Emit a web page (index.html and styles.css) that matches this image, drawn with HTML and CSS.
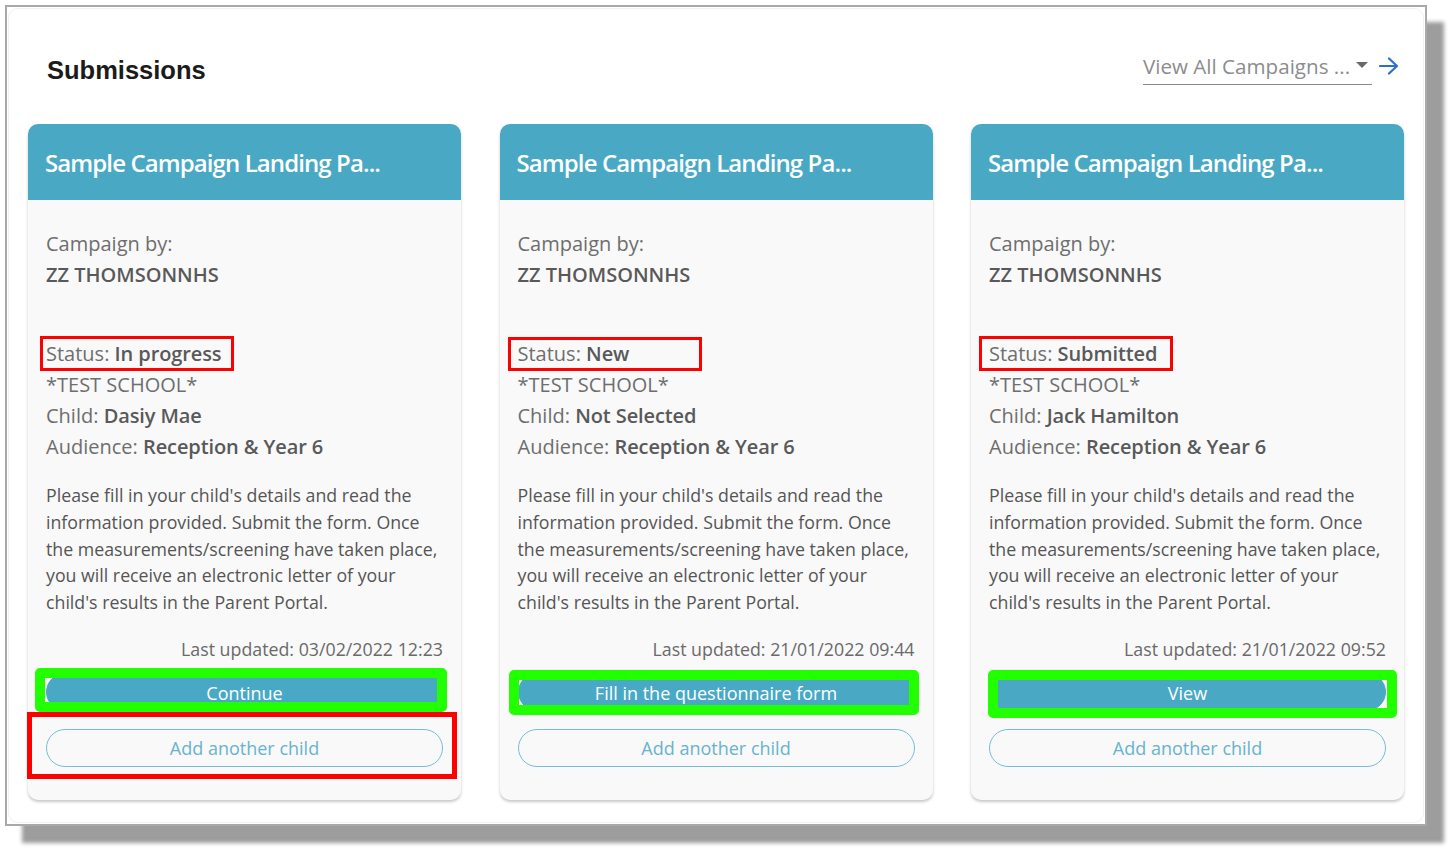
FILE: index.html
```html
<!DOCTYPE html>
<html lang="en">
<head>
<meta charset="utf-8">
<title>Submissions</title>
<link rel="stylesheet" href="styles.css">
</head>
<body>
<div class="frame">
  <div class="panel">
    <div class="top">
      <h1 class="title">Submissions</h1>
      <div class="viewall">
        <div class="select">
          <span class="select-text">View All Campaigns ...</span>
          <span class="caret"></span>
        </div>
        <svg class="arrow" width="20" height="18" viewBox="0 0 20 18"><path d="M1 9H18M10 1.5L18 9L10 16.5" fill="none" stroke="#2b6fd1" stroke-width="2.2" stroke-linecap="round" stroke-linejoin="round"/></svg>
      </div>
    </div>
    <div class="cards">
      <div class="card">
        <div class="card-head">Sample Campaign Landing Pa...</div>
        <div class="card-body">
          <div class="block">
            <div class="line">Campaign by:</div>
            <div class="line strong">ZZ THOMSONNHS</div>
          </div>
          <div class="block info">
            <div class="line">Status: <b>In progress</b></div>
            <div class="line">*TEST SCHOOL*</div>
            <div class="line">Child: <b>Dasiy Mae</b></div>
            <div class="line">Audience: <b>Reception &amp; Year 6</b></div>
          </div>
          <p class="desc">Please fill in your child's details and read the information provided. Submit the form. Once the measurements/screening have taken place, you will receive an electronic letter of your child's results in the Parent Portal.</p>
          <div class="updated">Last updated: 03/02/2022 12:23</div>
          <button class="btn primary">Continue</button>
          <button class="btn outline">Add another child</button>
        </div>
        <div class="mark red-status c1"></div>
        <div class="mark green c1"></div>
        <div class="mark red-add c1"></div>
      </div>
      <div class="card">
        <div class="card-head">Sample Campaign Landing Pa...</div>
        <div class="card-body">
          <div class="block">
            <div class="line">Campaign by:</div>
            <div class="line strong">ZZ THOMSONNHS</div>
          </div>
          <div class="block info">
            <div class="line">Status: <b>New</b></div>
            <div class="line">*TEST SCHOOL*</div>
            <div class="line">Child: <b>Not Selected</b></div>
            <div class="line">Audience: <b>Reception &amp; Year 6</b></div>
          </div>
          <p class="desc">Please fill in your child's details and read the information provided. Submit the form. Once the measurements/screening have taken place, you will receive an electronic letter of your child's results in the Parent Portal.</p>
          <div class="updated">Last updated: 21/01/2022 09:44</div>
          <button class="btn primary">Fill in the questionnaire form</button>
          <button class="btn outline">Add another child</button>
        </div>
        <div class="mark red-status c2"></div>
        <div class="mark green c2"></div>
      </div>
      <div class="card">
        <div class="card-head">Sample Campaign Landing Pa...</div>
        <div class="card-body">
          <div class="block">
            <div class="line">Campaign by:</div>
            <div class="line strong">ZZ THOMSONNHS</div>
          </div>
          <div class="block info">
            <div class="line">Status: <b>Submitted</b></div>
            <div class="line">*TEST SCHOOL*</div>
            <div class="line">Child: <b>Jack Hamilton</b></div>
            <div class="line">Audience: <b>Reception &amp; Year 6</b></div>
          </div>
          <p class="desc">Please fill in your child's details and read the information provided. Submit the form. Once the measurements/screening have taken place, you will receive an electronic letter of your child's results in the Parent Portal.</p>
          <div class="updated">Last updated: 21/01/2022 09:52</div>
          <button class="btn primary">View</button>
          <button class="btn outline">Add another child</button>
        </div>
        <div class="mark red-status c3"></div>
        <div class="mark green c3"></div>
      </div>
    </div>
  </div>
</div>
</body>
</html>
```
FILE: styles.css
```css
* { box-sizing: border-box; }
html, body { margin: 0; padding: 0; background: #ffffff; }
body { width: 1455px; height: 848px; overflow: hidden; }

.frame {
  margin: 5px 0 0 5px;
  width: 1422px;
  height: 821px;
  border: 2px solid #a9a9a9;
  background: #ffffff;
  box-shadow: 17px 17px 4px #9d9d9d;
  padding: 1px;
}
.panel {
  height: 100%;
  border-radius: 10px;
  border: 1px solid #f1f1f1;
  padding: 0 0 0 19px;
}

.top {
  display: flex;
  align-items: flex-start;
  justify-content: space-between;
  height: 115px;
  padding-right: 24px;
}
.title {
  margin: 47px 0 0 19px;
  font-family: "Liberation Sans", Arial, sans-serif;
  font-weight: 700;
  font-size: 25.5px;
  line-height: 28px;
  color: #1b1b1b;
}
.viewall {
  display: flex;
  align-items: flex-start;
  margin-top: 42px;
}
.select {
  display: flex;
  align-items: flex-start;
  width: 229px;
  height: 34px;
  border-bottom: 1.5px solid #8a8a8a;
}
.select-text {
  font-family: "Open Sans", sans-serif;
  font-size: 20.6px;
  color: #8c8c8c;
  line-height: 30px;
}
.caret {
  width: 0; height: 0;
  border-left: 6px solid transparent;
  border-right: 6px solid transparent;
  border-top: 6px solid #6a6a6a;
  margin-left: 6px;
  margin-top: 11px;
}
.arrow { margin: 6px 0 0 7px; }

.cards {
  display: flex;
  gap: 38.5px;
}
.card {
  position: relative;
  width: 433px;
  border-radius: 10px;
  background: #f9f9f9;
  box-shadow: 0 2px 3px rgba(0,0,0,0.22);
  font-family: "Open Sans", sans-serif;
}
.card-head {
  height: 76px;
  background: #49a9c5;
  border-radius: 10px 10px 0 0;
  color: #ffffff;
  font-weight: 600;
  font-size: 24px;
  letter-spacing: -0.9px;
  line-height: 77px;
  padding-left: 17px;
  white-space: nowrap;
}
.card-body {
  padding: 29px 18px 33px 18px;
  color: #6e6e6e;
}
.line {
  font-size: 20px;
  line-height: 30.7px;
  letter-spacing: 0;
  white-space: nowrap;
}
.line b, .line.strong {
  font-weight: 600;
  color: #595959;
}
.line b { letter-spacing: -0.1px; }
.line.strong { letter-spacing: 0; }
.info { margin-top: 49px; }
.desc {
  margin: 20px 0 0 0;
  font-size: 17.75px;
  line-height: 26.7px;
  color: #555555;
}
.updated {
  margin-top: 20px;
  text-align: right;
  font-size: 17.8px;
  line-height: 26px;
  color: #6a6a6a;
}
.btn {
  display: block;
  width: 397px;
  height: 38px;
  border-radius: 19px;
  font-family: "Open Sans", sans-serif;
  font-size: 18px;
  line-height: 36px;
  padding: 0;
  cursor: pointer;
}
.btn.primary {
  margin-top: 11px;
  background: #49a9c5;
  border: 1.5px solid #49a9c5;
  color: #ffffff;
  line-height: 38px;
}
.btn.outline {
  margin-top: 18px;
  background: transparent;
  border: 1.5px solid #72bfd6;
  color: #67b4cd;
}

/* annotation marks drawn over the screenshot */
.mark { position: absolute; pointer-events: none; }
.red-status { border: 3px solid #ff0000; height: 35px; width: 194px; top: 212px; }
.red-status.c1 { left: 12px; }
.red-status.c2 { left: 8px; top: 213px; height: 34px; }
.red-status.c3 { left: 8px; }
.green { border: 10px solid #22ff00; border-radius: 5px; }
.green.c1 { left: 7px; top: 544px; width: 412px; height: 44px; }
.green.c2 { left: 9px; top: 546px; width: 410px; height: 45px; }
.green.c3 { left: 17px; top: 546px; width: 409px; height: 48px; }
.red-add { border: 5px solid #ff0000; left: -1px; top: 588px; width: 430px; height: 67px; }
```
